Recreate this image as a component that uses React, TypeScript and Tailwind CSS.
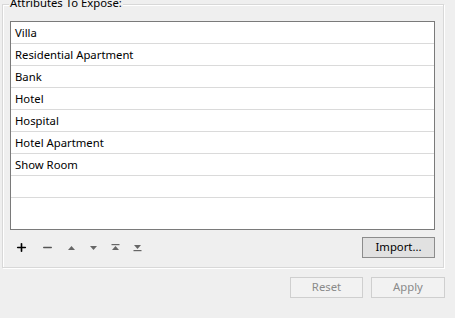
import { Plus, Minus } from 'lucide-react'

const items = ['Villa', 'Residential Apartment', 'Bank', 'Hotel', 'Hospital', 'Hotel Apartment', 'Show Room', '']

function Tri({ up, bar }: { up?: boolean; bar?: boolean }) {
    return (
        <svg width="9" height="9" viewBox="0 0 9 9" className="text-[#666]">
            {bar && <rect x="0.5" y={up ? 1 : 7} width="8" height="1.2" fill="currentColor" />}
            {up ? (
                <polygon points="4.5,3 8,7 1,7" fill="currentColor" />
            ) : (
                <polygon points={bar ? '1,2 8,2 4.5,6' : '1,3 8,3 4.5,7'} fill="currentColor" />
            )}
        </svg>
    )
}

export default function App() {
    return (
        <div
            className="w-[455px] h-[318px] bg-[#efefef] overflow-hidden text-[11.3px] text-black"
            style={{ fontFamily: '"Segoe UI", "Noto Sans", "Open Sans", sans-serif' }}
        >
            <div className="relative ml-[2px] mt-[4px] w-[442px] h-[264px] border border-[#d8d8d8] shadow-[inset_1px_1px_0_#ffffff,1px_1px_0_#ffffff]">
                <span className="absolute -top-[10px] left-[6px] px-[1px] bg-[#efefef] leading-[16px]">
                    Attributes To Expose:
                </span>

                <div className="ml-[7px] mt-[16px] w-[425px] h-[209px] border border-[#7a7a7a] bg-white flex flex-col">
                    {items.map((item, i) => (
                        <div key={i} className="h-[22px] shrink-0 border-b border-[#dadada] pl-[4px] leading-[21px]">
                            {item}
                        </div>
                    ))}
                </div>

                <div className="ml-[7px] mt-[7px] w-[425px] flex items-center">
                    <div className="flex items-center gap-[13px] pl-[5px]">
                        <Plus size={13} strokeWidth={3} className="text-black" />
                        <Minus size={13} strokeWidth={2.5} className="text-[#555]" />
                        <Tri up />
                        <Tri />
                        <Tri up bar />
                        <Tri bar />
                    </div>
                    <button className="ml-auto w-[73px] h-[21px] border border-[#8c8c8c] bg-[#e1e1e1] text-black">
                        Import...
                    </button>
                </div>
            </div>

            <div className="flex justify-end gap-[8px] mt-[9px] pr-[10px]">
                <button className="w-[73px] h-[21px] border border-[#cfcfcf] bg-[#f2f2f2] text-[#8a8a8a]">Reset</button>
                <button className="w-[74px] h-[21px] border border-[#cfcfcf] bg-[#f2f2f2] text-[#8a8a8a]">Apply</button>
            </div>
        </div>
    )
}
